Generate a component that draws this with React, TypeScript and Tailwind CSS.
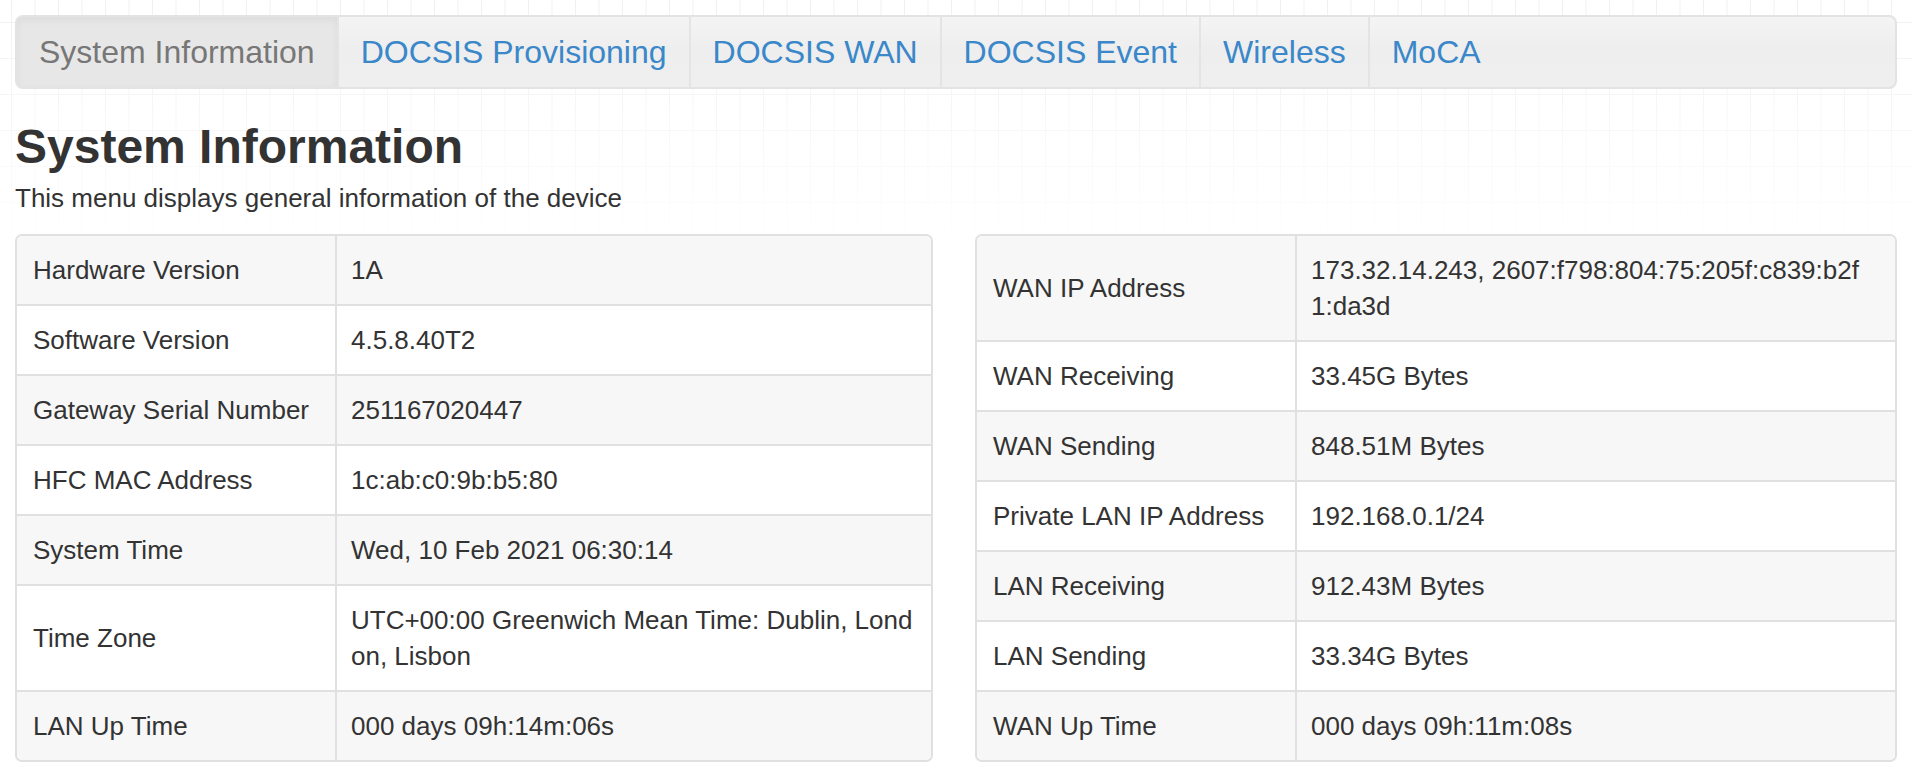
import React from 'react';

type Row = { label: string; value: string[] };

const leftRows: Row[] = [
  { label: 'Hardware Version', value: ['1A'] },
  { label: 'Software Version', value: ['4.5.8.40T2'] },
  { label: 'Gateway Serial Number', value: ['251167020447'] },
  { label: 'HFC MAC Address', value: ['1c:ab:c0:9b:b5:80'] },
  { label: 'System Time', value: ['Wed, 10 Feb 2021 06:30:14'] },
  { label: 'Time Zone', value: ['UTC+00:00 Greenwich Mean Time: Dublin, Lond', 'on, Lisbon'] },
  { label: 'LAN Up Time', value: ['000 days 09h:14m:06s'] },
];

const rightRows: Row[] = [
  { label: 'WAN IP Address', value: ['173.32.14.243, 2607:f798:804:75:205f:c839:b2f', '1:da3d'] },
  { label: 'WAN Receiving', value: ['33.45G Bytes'] },
  { label: 'WAN Sending', value: ['848.51M Bytes'] },
  { label: 'Private LAN IP Address', value: ['192.168.0.1/24'] },
  { label: 'LAN Receiving', value: ['912.43M Bytes'] },
  { label: 'LAN Sending', value: ['33.34G Bytes'] },
  { label: 'WAN Up Time', value: ['000 days 09h:11m:08s'] },
];

const tabs = ['System Information', 'DOCSIS Provisioning', 'DOCSIS WAN', 'DOCSIS Event', 'Wireless', 'MoCA'];

const InfoTable: React.FC<{ rows: Row[] }> = ({ rows }) => (
  <div className="border-2 border-[#e0e0e0] rounded-[7px] overflow-hidden">
    <table className="w-full border-collapse table-fixed">
      <tbody>
        {rows.map((row, i) => (
          <tr
            key={row.label}
            className={`${i % 2 === 0 ? 'bg-[#f7f7f7]' : 'bg-white'} ${i > 0 ? 'border-t-2 border-[#e0e0e0]' : ''}`}
          >
            <td className="w-[319px] border-r-2 border-[#e0e0e0] pl-4 pr-2 py-4 align-middle whitespace-nowrap">
              {row.label}
            </td>
            <td className="pl-[14px] pr-2 py-4 align-middle">
              {row.value.map((line) => (
                <div key={line} className="whitespace-nowrap">{line}</div>
              ))}
            </td>
          </tr>
        ))}
      </tbody>
    </table>
  </div>
);

export default function App() {
  return (
    <div
      className="min-h-[780px] bg-white px-[15px] pt-[15px] pb-6 text-[#333] text-[26px] leading-[36px] font-['Liberation_Sans',Arial,Helvetica,sans-serif] bg-[linear-gradient(to_bottom,rgba(255,255,255,0)_0px,#ffffff_250px),linear-gradient(to_right,#f0f0f0_1px,transparent_1px),linear-gradient(to_bottom,#f0f0f0_1px,transparent_1px)] bg-[size:100%_100%,23.5px_36px,23.5px_36px] bg-[position:0_0,11px_0,0_22px]"
    >
      <nav className="flex h-[74px] border-2 border-[#e3e3e3] rounded-[8px] overflow-hidden bg-[linear-gradient(to_bottom,#f4f4f4_0%,#eeeeee_45%,#efefef_100%)]">
        {tabs.map((t, i) => {
          const active = i === 0;
          const last = i === tabs.length - 1;
          return (
            <div
              key={t}
              className={`flex items-center px-[22px] text-[32px] ${
                active
                  ? 'bg-[#e7e7e7] text-[#777] shadow-[inset_0_3px_8px_rgba(0,0,0,0.05)]'
                  : 'text-[#3a87c9]'
              } ${last ? '' : 'border-r-2 border-[#e4e4e4]'}`}
            >
              {t}
            </div>
          );
        })}
      </nav>

      <h2 className="mt-[31px] text-[48px] font-bold leading-[53px] text-[#333]">System Information</h2>
      <p className="mt-[8px] leading-[35px]">This menu displays general information of the device</p>

      <div className="mt-[18px] grid grid-cols-[918px_922px] gap-[42px]">
        <InfoTable rows={leftRows} />
        <InfoTable rows={rightRows} />
      </div>
    </div>
  );
}
